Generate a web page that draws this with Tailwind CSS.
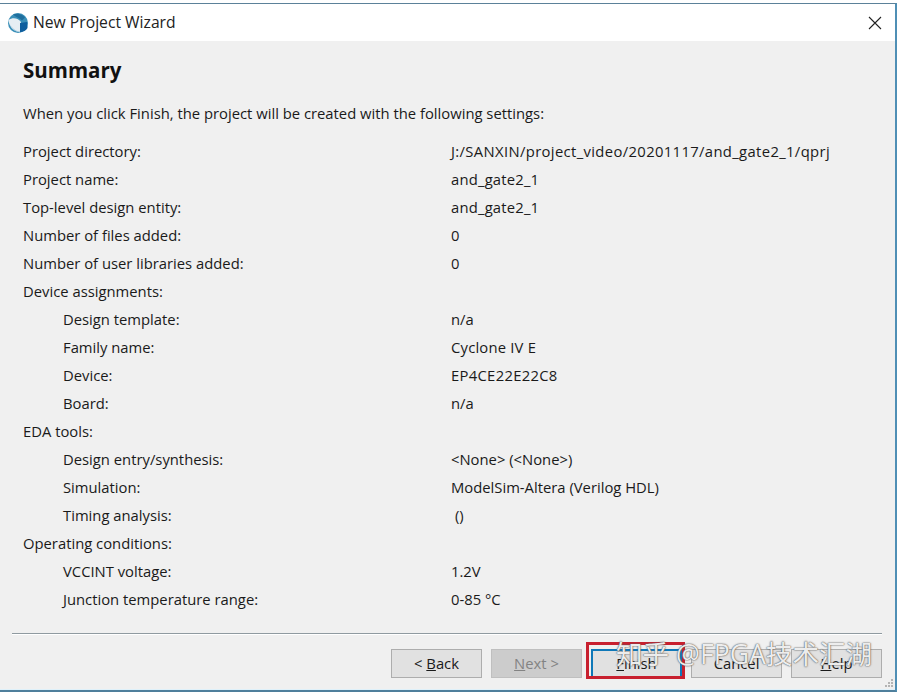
<!DOCTYPE html>
<html lang="en">
<head>
    <meta charset="UTF-8">
    <title>New Project Wizard</title>
    <script src="https://cdn.jsdelivr.net/npm/@tailwindcss/browser@4"></script>
</head>
<body class="bg-white">
    <div class="relative w-[897px] h-[692px] overflow-hidden bg-white pt-[3px] font-['Open_Sans','Noto_Sans_CJK_SC',sans-serif] text-[14.8px] text-[#1a1a1a]">
        <div class="h-[689px] flex flex-col border-t border-r-2 border-b-2 border-t-[#5b8199] border-r-[#4f8fb5] border-b-[#4f7f9c]">
            <!-- title bar -->
            <div class="h-[37px] shrink-0 flex items-center pl-[7px] pr-[13px] bg-white">
                <svg class="w-[22px] h-[22px] mr-[4px]" viewBox="0 0 22 22">
                    <circle cx="11" cy="11" r="10" fill="#3a8fb8"/>
                    <path d="M6 2.5c4-1.500 9-.5 12 3l-3 3c-3-2.500-6-3.500-9-6z" fill="#1f6f9e"/>
                    <path d="M1.500 8c4-3 10-2 12.500 2l-1 10c-6 0-11-5-11.500-12z" fill="#e6eef3"/>
                    <path d="M3 12c2 4 5 7 10 7.500l0 .5c-5 0-8-3-10-8z" fill="#9cc4da"/>
                    <path d="M13 11l7-1 .5 6c-1.500 2.500-4 4-7.500 4.200z" fill="#0f5f9e"/>
                </svg>
                <span class="text-[15.7px] text-[#222]">New Project Wizard</span>
                <svg class="ml-auto w-[14px] h-[14px]" viewBox="0 0 14 14" fill="none" stroke="#222" stroke-width="1.1">
                    <path d="M1 1l12 12M13 1L1 13"/>
                </svg>
            </div>
            <!-- body -->
            <div class="relative flex-1 flex flex-col bg-[#f0f0f0] border-b border-b-[#dff1fa]">
                <div class="pl-[23px] pt-[14px]">
                    <h1 class="text-[20.5px] leading-[30px] font-bold text-[#111]">Summary</h1>
                    <p class="mt-[18px] leading-[20px]">When you click Finish, the project will be created with the following settings:</p>
                    <div class="mt-[14px] grid grid-cols-[428px_1fr] auto-rows-[28px] items-center">
                        <div>Project directory:</div><div class="tracking-[0.36px]">J:/SANXIN/project_video/20201117/and_gate2_1/qprj</div>
                        <div>Project name:</div><div class="tracking-[0.2px]">and_gate2_1</div>
                        <div>Top-level design entity:</div><div class="tracking-[0.2px]">and_gate2_1</div>
                        <div>Number of files added:</div><div>0</div>
                        <div>Number of user libraries added:</div><div>0</div>
                        <div>Device assignments:</div><div></div>
                        <div class="pl-[40px]">Design template:</div><div>n/a</div>
                        <div class="pl-[40px]">Family name:</div><div class="tracking-[0.2px]">Cyclone IV E</div>
                        <div class="pl-[40px]">Device:</div><div class="tracking-[0.3px]">EP4CE22E22C8</div>
                        <div class="pl-[40px]">Board:</div><div>n/a</div>
                        <div>EDA tools:</div><div></div>
                        <div class="pl-[40px]">Design entry/synthesis:</div><div>&lt;None&gt; (&lt;None&gt;)</div>
                        <div class="pl-[40px]">Simulation:</div><div>ModelSim-Altera (Verilog HDL)</div>
                        <div class="pl-[40px]">Timing analysis:</div><div class="pl-[4px]">()</div>
                        <div>Operating conditions:</div><div></div>
                        <div class="pl-[40px]">VCCINT voltage:</div><div>1.2V</div>
                        <div class="pl-[40px]">Junction temperature range:</div><div>0-85 °C</div>
                    </div>
                </div>
                <!-- footer -->
                <div class="mt-auto ml-[12px] mr-[13px] border-t border-t-[#8f9aa0] shadow-[inset_0_1px_0_#ffffff] h-[56px] pt-[15px] flex justify-end gap-[9px]">
                    <button class="w-[91px] h-[29px] bg-[#e1e1e1] border border-[#adadad]">&lt; <u>B</u>ack</button>
                    <button class="w-[91px] h-[29px] bg-[#cccccc] border border-[#bfbfbf] text-[#838383]"><u>N</u>ext &gt;</button>
                    <button class="w-[91px] h-[29px] bg-[#e1e1e1] border-2 border-[#0f78b8]"><u>F</u>inish</button>
                    <button class="w-[91px] h-[29px] bg-[#e1e1e1] border border-[#adadad]">Cancel</button>
                    <button class="w-[91px] h-[29px] bg-[#e1e1e1] border border-[#adadad]"><u>H</u>elp</button>
                </div>
                <!-- resize grip -->
                <svg class="absolute right-[1px] bottom-[1px] w-[10px] h-[10px]" viewBox="0 0 10 10" fill="#b4b4b4">
                    <rect x="7" y="1" width="2" height="2"/>
                    <rect x="4" y="4" width="2" height="2"/><rect x="7" y="4" width="2" height="2"/>
                    <rect x="1" y="7" width="2" height="2"/><rect x="4" y="7" width="2" height="2"/><rect x="7" y="7" width="2" height="2"/>
                </svg>
            </div>
        </div>
        <!-- annotation + watermark -->
        <div class="absolute left-[586px] top-[642px] w-[99px] h-[37px] border-[3px] border-[#c8202f]"></div>
        <div class="absolute left-[616px] top-[635px] text-[26.6px] leading-[38px] whitespace-nowrap text-white/90 [text-shadow:0_0_1px_#444,0_0_2px_#666]">知乎 @FPGA技术汇湖</div>
    </div>
</body>
</html>
